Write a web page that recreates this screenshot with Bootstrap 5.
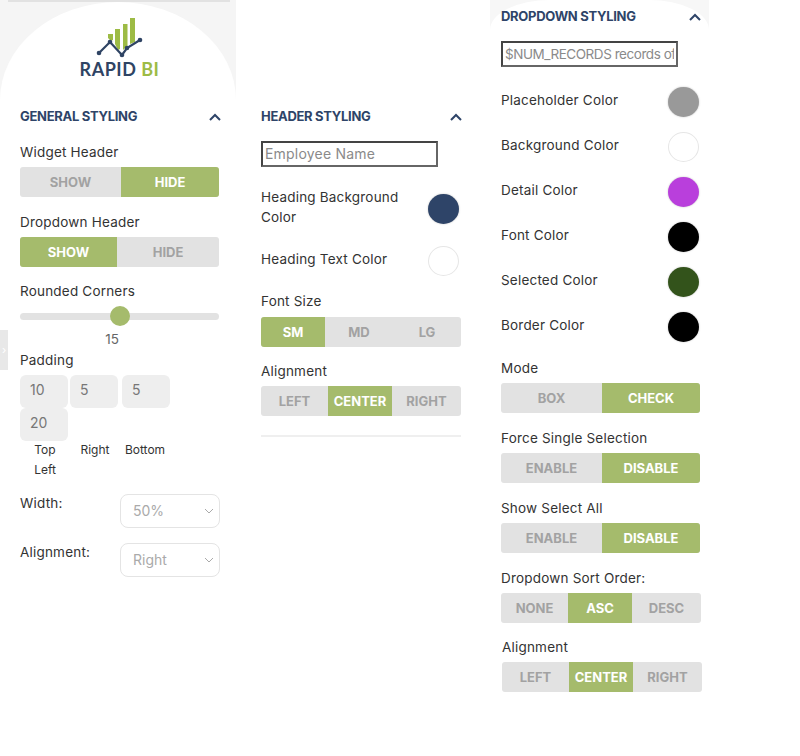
<!DOCTYPE html>
<html lang="en">
<head>
<meta charset="utf-8">
<title>Rapid BI styling</title>
<link href="https://cdn.jsdelivr.net/npm/bootstrap@5.3.0/dist/css/bootstrap.min.css" rel="stylesheet">
<style>
body{background:#fff;font-family:"Inter","Liberation Sans",sans-serif;font-size:13px;color:#333;margin:0;height:756px;overflow:hidden;position:relative}
.cols{width:800px;align-items:flex-start}
.col-a{width:236px;flex:none}
.col-b{width:254px;flex:none;padding:100px 29px 0 25px}
.col-c{width:219px;flex:none;padding:0 9px 0 11px}
.dome-wrap{height:100px;background:#f5f5f5;padding-top:2px;position:relative}
.dome-wrap::before{content:"";position:absolute;left:8px;right:6px;top:0;height:2px;background:#e2e2e2}
.dome{height:98px;background:#fff;border-radius:118px 118px 0 0 / 98px 98px 0 0;display:flex;flex-direction:column;align-items:center}
.logo-svg{margin-top:14px;display:block}
.logo-text{font:700 18px/16px "Lato","Liberation Sans",sans-serif;letter-spacing:.5px;color:#2f4464;margin-top:-1px;padding-left:3px;white-space:nowrap}
.logo-text span{color:#9dbb45}
.a-body{padding:0 16px 0 20px}
.sec-head{height:32px;padding-top:2px;font-weight:700;font-size:13px;color:#2e4468;letter-spacing:-.3px}
.sec-head svg{margin-right:-1px}
.lbl{font-size:13.5px;line-height:20px;color:#333;letter-spacing:.2px}
.seg{width:200px;height:30px;background:#e2e2e2;border-radius:3px;overflow:hidden;display:flex}
.seg .btn{border:0;border-radius:0;padding:0;flex:1 1 0;background:transparent;color:#a2a2a2;font-weight:700;font-size:13px;line-height:30px;height:30px}
.seg .btn.on{background:#a5bb6c;color:#fff}
.seg .btn.w-n{flex:0 0 64px}
.seg .btn.w-l{flex:0 0 67px}
.seg-b1,.seg-b2{width:199px}
.seg-b1 .btn:first-child{flex:0 0 101px}
.seg-b2 .btn:first-child{flex:0 0 97px}
.range-x{width:199px;height:20px;display:block;padding:0;margin:0}
.range-x::-webkit-slider-runnable-track{height:7px;background:#e2e2e2;border-radius:4px}
.range-x::-webkit-slider-thumb{width:20px;height:20px;margin-top:-6.5px;background:#a5bb6c;border-radius:50%;border:0}
.val{font-size:13.5px;line-height:20px;color:#666;width:184px;text-align:center}
.pad-grid{width:152px;column-gap:2px;row-gap:0}
.pad-box{width:48px;height:33px;background:#eee;border-radius:6px;color:#777;font-size:14px;line-height:30px;padding-left:10px}
.pad-box.c3{margin-left:2px}
.pad-lab{width:152px;font-size:12px;line-height:20px;color:#333;text-align:center}
.pad-lab>div{width:50px}
.sel-row{width:200px}
.sel-x{width:100px;height:34px;margin-top:1px;border:1px solid #e4e4e4;border-radius:8px;color:#aaa;font-size:14px;padding:0 0 0 12px;line-height:32px;position:relative}
.sel-x svg{position:absolute;right:5px;top:13px}
.txt-x{display:block;width:177px;height:26px;border:2px solid;border-color:#444 #666 #666 #444;border-radius:0;padding:0 2px 1px;font:14px/22px "Inter","Liberation Sans",sans-serif;color:#8a8a8a;letter-spacing:.2px;background:#fff;overflow:hidden;outline:0}
.txt-x::placeholder{color:#8a8a8a;opacity:1}
.txt-tight{font-size:13.5px;letter-spacing:-.45px}
.sw-row{width:198px;height:45px}
.sw-row .lbl{margin-top:3px}
.hb-row{width:198px}
.hb-row .lbl{width:150px}
.swatch{width:31px;height:30px;border-radius:50%;display:block;flex:none;box-shadow:0 0 2px rgba(0,0,0,.25)}
.sw-w{background:#fff;border:1px solid #e6e6e6;box-shadow:none}
.sw-navy{background:#2e4468;margin-top:7px}
.sw-grey{background:#999}
.sw-purple{background:#b93fdc}
.sw-black{background:#000}
.sw-green{background:#33531b}
.ht-lbl{margin-top:3px}
.rule-x{width:200px;height:2px;background:#efefef;margin-top:19px}
.pull-tab{position:absolute;left:0;top:330px;width:8px;height:40px;background:#e8e8e8;color:#fff;font-size:11px;line-height:40px;text-align:center}
.c-top{height:32px;position:relative}
.c-edge{position:absolute;left:-11px;right:-9px;top:0;height:30px;background:#f7f7f7;z-index:0}
.c-edge::after{content:"";position:absolute;inset:0;background:#fff;border-radius:60px 60px 0 0 / 30px 30px 0 0}
.c-top .sec-head{position:relative;z-index:1}
.nudge{margin-left:1px}
.t-m1{margin-top:-1px}.t1{margin-top:1px}.t3{margin-top:3px}.t5{margin-top:5px}.t6{margin-top:6px}.t9{margin-top:9px}.t10{margin-top:10px}.t13{margin-top:13px}.t14{margin-top:14px}.t15{margin-top:15px}.t19{margin-top:19px}.t20{margin-top:20px}
</style>
</head>
<body>
<div class="pull-tab">›</div>
<div class="d-flex cols">
  <div class="col-a">
    <div class="dome-wrap">
      <div class="dome">
        <svg class="logo-svg" width="50" height="46" viewBox="93 16 50 46" aria-label="Rapid BI logo">
          <path fill="#9dbb45" d="M108 34h5v6l-2 1-3-3zM115 29h5v20l-2 1-3-6zM123 24h4.500v22l-4.500 4zM130 18h5v24l-5 2z"/>
          <path fill="none" stroke="#2f4464" stroke-width="2.200" d="M99 53 110 42 122 55 127 48 140 40"/>
          <g fill="#2f4464"><circle cx="99" cy="53" r="2.300"/><circle cx="110" cy="42" r="2.300"/><circle cx="122" cy="55" r="2.300"/><circle cx="127" cy="48" r="2.300"/><circle cx="140" cy="40" r="2.300"/></g>
        </svg>
        <div class="logo-text">RAPID <span>BI</span></div>
      </div>
    </div>
    <div class="a-body">
      <div class="sec-head d-flex justify-content-between align-items-center">GENERAL STYLING <svg width="12" height="8" viewBox="0 0 12 8"><path d="M1 7l5-5 5 5" fill="none" stroke="#2e4468" stroke-width="2"/></svg></div>
      <div class="lbl t10">Widget Header</div>
      <div class="seg seg-b1 t5"><button class="btn" type="button">SHOW</button><button class="btn on" type="button">HIDE</button></div>
      <div class="lbl t15">Dropdown Header</div>
      <div class="seg seg-b2 t5"><button class="btn on" type="button">SHOW</button><button class="btn" type="button">HIDE</button></div>
      <div class="lbl t14">Rounded Corners</div>
      <input class="form-range range-x t5" type="range" min="0" max="30" value="15" aria-label="Rounded Corners">
      <div class="val t3">15</div>
      <div class="lbl t1">Padding</div>
      <div class="d-flex flex-wrap pad-grid t5"><div class="pad-box">10</div><div class="pad-box">5</div><div class="pad-box c3">5</div><div class="pad-box">20</div></div>
      <div class="d-flex flex-wrap pad-lab t-m1"><div>Top</div><div>Right</div><div>Bottom</div><div>Left</div></div>
      <div class="d-flex justify-content-between align-items-start sel-row t13"><div class="lbl">Width:</div><div class="sel-x">50%<svg width="10" height="6" viewBox="0 0 10 6"><path d="M1 1l4 4 4-4" fill="none" stroke="#aaa"/></svg></div></div>
      <div class="d-flex justify-content-between align-items-start sel-row t14"><div class="lbl">Alignment:</div><div class="sel-x">Right<svg width="10" height="6" viewBox="0 0 10 6"><path d="M1 1l4 4 4-4" fill="none" stroke="#aaa"/></svg></div></div>
    </div>
  </div>
  <div class="col-b">
    <div class="sec-head d-flex justify-content-between align-items-center">HEADER STYLING <svg width="12" height="8" viewBox="0 0 12 8"><path d="M1 7l5-5 5 5" fill="none" stroke="#2e4468" stroke-width="2"/></svg></div>
    <input class="txt-x t9" type="text" placeholder="Employee Name" aria-label="Header text">
    <div class="d-flex justify-content-between align-items-start hb-row t20"><div class="lbl">Heading Background Color</div><span class="swatch sw-navy"></span></div>
    <div class="d-flex justify-content-between align-items-start hb-row t19"><div class="lbl ht-lbl">Heading Text Color</div><span class="swatch sw-w"></span></div>
    <div class="lbl t15">Font Size</div>
    <div class="seg t6"><button class="btn on w-n" type="button">SM</button><button class="btn" type="button">MD</button><button class="btn" type="button">LG</button></div>
    <div class="lbl t14">Alignment</div>
    <div class="seg t5"><button class="btn w-l" type="button">LEFT</button><button class="btn on w-n" type="button">CENTER</button><button class="btn" type="button">RIGHT</button></div>
    <div class="rule-x"></div>
  </div>
  <div class="col-c">
    <div class="c-top"><div class="c-edge"></div><div class="sec-head d-flex justify-content-between align-items-center">DROPDOWN STYLING <svg width="12" height="8" viewBox="0 0 12 8"><path d="M1 7l5-5 5 5" fill="none" stroke="#2e4468" stroke-width="2"/></svg></div></div>
    <input class="txt-x txt-tight t9" type="text" placeholder="$NUM_RECORDS records of" aria-label="Dropdown text">
    <div class="t20">
      <div class="d-flex justify-content-between align-items-start sw-row"><div class="lbl">Placeholder Color</div><span class="swatch sw-grey"></span></div>
      <div class="d-flex justify-content-between align-items-start sw-row"><div class="lbl">Background Color</div><span class="swatch sw-w"></span></div>
      <div class="d-flex justify-content-between align-items-start sw-row"><div class="lbl">Detail Color</div><span class="swatch sw-purple"></span></div>
      <div class="d-flex justify-content-between align-items-start sw-row"><div class="lbl">Font Color</div><span class="swatch sw-black"></span></div>
      <div class="d-flex justify-content-between align-items-start sw-row"><div class="lbl">Selected Color</div><span class="swatch sw-green"></span></div>
      <div class="d-flex justify-content-between align-items-start sw-row"><div class="lbl">Border Color</div><span class="swatch sw-black"></span></div>
    </div>
    <div class="lbl t1">Mode</div>
    <div class="seg seg-b1 t5"><button class="btn" type="button">BOX</button><button class="btn on" type="button">CHECK</button></div>
    <div class="lbl t15">Force Single Selection</div>
    <div class="seg seg-b1 t5"><button class="btn" type="button">ENABLE</button><button class="btn on" type="button">DISABLE</button></div>
    <div class="lbl t15">Show Select All</div>
    <div class="seg seg-b1 t5"><button class="btn" type="button">ENABLE</button><button class="btn on" type="button">DISABLE</button></div>
    <div class="lbl t15">Dropdown Sort Order:</div>
    <div class="seg t5"><button class="btn w-l" type="button">NONE</button><button class="btn on w-n" type="button">ASC</button><button class="btn" type="button">DESC</button></div>
    <div class="nudge">
      <div class="lbl t14">Alignment</div>
      <div class="seg t5"><button class="btn w-l" type="button">LEFT</button><button class="btn on w-n" type="button">CENTER</button><button class="btn" type="button">RIGHT</button></div>
    </div>
  </div>
</div>
</body>
</html>
